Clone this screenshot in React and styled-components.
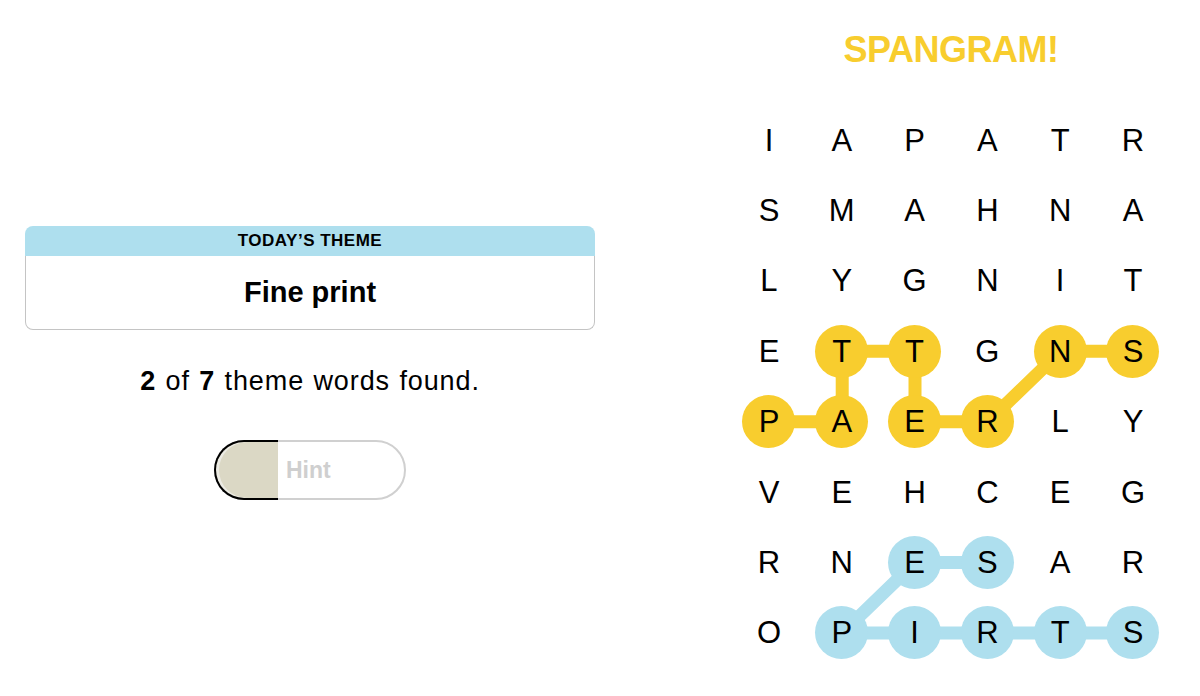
import React from 'react';
import styled, { createGlobalStyle } from 'styled-components';

const YELLOW = '#f8cd2e';
const BLUE = '#aedfee';
const COL = 72.8;
const ROW = 70.4;

const GlobalStyle = createGlobalStyle`
  body {
    margin: 0;
    background: #fff;
    color: #000;
    font-family: 'Liberation Sans', Arial, sans-serif;
  }
`;

const Page = styled.div`
  display: flex;
  width: 1200px;
  height: 696px;
  padding-left: 25px;
  box-sizing: border-box;
  overflow: hidden;
`;

const LeftColumn = styled.div`
  width: 570px;
  padding-top: 226px;
  display: flex;
  flex-direction: column;
  align-items: center;
`;

const ThemeCard = styled.div`
  width: 100%;
`;

const ThemeHeader = styled.div`
  height: 30px;
  background: ${BLUE};
  border-radius: 8px 8px 0 0;
  display: flex;
  align-items: center;
  justify-content: center;
  font-size: 17px;
  font-weight: 700;
  letter-spacing: 0.5px;
  text-transform: uppercase;
`;

const ThemeBody = styled.div`
  height: 73px;
  border: 1px solid #c4c4c4;
  border-top: none;
  border-radius: 0 0 8px 8px;
  display: flex;
  align-items: center;
  justify-content: center;
  font-size: 29px;
  font-weight: 700;
`;

const Progress = styled.p`
  margin: 36px 0 0;
  font-size: 27px;
  letter-spacing: 0.9px;
  word-spacing: 1px;
  line-height: 30px;

  b {
    font-weight: 700;
  }
`;

const HintButton = styled.button`
  position: relative;
  margin-top: 44px;
  width: 192px;
  height: 60px;
  border: 2px solid #d0d0d0;
  border-radius: 30px;
  background: #fff;
  padding: 0 0 0 70px;
  display: flex;
  align-items: center;
  font-family: 'Liberation Sans', Arial, sans-serif;
  font-size: 23px;
  font-weight: 700;
  color: #cfcfcf;
`;

const HintLabel = styled.span`
  position: relative;
`;

const HintFill = styled.span`
  position: absolute;
  left: -2px;
  top: -2px;
  bottom: -2px;
  width: ${p => p.$width}px;
  background: #dbd8c5;
  border: 2.5px solid #000;
  border-right: none;
  border-radius: 30px 0 0 30px;
  box-shadow: inset 3px 0 0 #ecebe4;
  box-sizing: border-box;
`;

const RightColumn = styled.div`
  width: ${COL * 6}px;
  margin-left: 137.6px;
  padding-top: 30px;
  display: flex;
  flex-direction: column;
`;

const Title = styled.h1`
  margin: 0;
  height: 40px;
  line-height: 40px;
  text-align: center;
  font-size: 36px;
  font-weight: 700;
  letter-spacing: -0.5px;
  color: ${YELLOW};
`;

const Board = styled.div`
  position: relative;
  margin-top: 35px;
  display: grid;
  grid-template-columns: repeat(6, ${COL}px);
  grid-template-rows: repeat(8, ${ROW}px);
`;

const Links = styled.svg`
  position: absolute;
  left: 0;
  top: 0;
  width: 100%;
  height: 100%;
`;

const Cell = styled.div`
  position: relative;
  display: flex;
  align-items: center;
  justify-content: center;
`;

const Dot = styled.span`
  width: 53px;
  height: 53px;
  border-radius: 50%;
  background: ${p => p.$color || 'transparent'};
  display: flex;
  align-items: center;
  justify-content: center;
  font-size: 31px;
  line-height: 1;
  color: #000;
`;

const letters = [
  'IAPATR',
  'SMAHNA',
  'LYGNIT',
  'ETTGNS',
  'PAERLY',
  'VEHCEG',
  'RNESAR',
  'OPIRTS',
];

const words = [
  { color: YELLOW, path: [[4, 0], [4, 1], [3, 1], [3, 2], [4, 2], [4, 3], [3, 4], [3, 5]] },
  { color: BLUE, path: [[7, 5], [7, 4], [7, 3], [7, 2], [7, 1], [6, 2], [6, 3]] },
];

const colorAt = (r, c) => {
  const w = words.find(w => w.path.some(([pr, pc]) => pr === r && pc === c));
  return w ? w.color : null;
};

const center = ([r, c]) => [COL / 2 + c * COL, ROW / 2 + r * ROW];

const App = () => (
  <>
    <GlobalStyle />
    <Page>
      <LeftColumn>
        <ThemeCard>
          <ThemeHeader>Today’s theme</ThemeHeader>
          <ThemeBody>Fine print</ThemeBody>
        </ThemeCard>
        <Progress>
          <b>2</b> of <b>7</b> theme words found.
        </Progress>
        <HintButton>
          <HintFill $width={64} />
          <HintLabel>Hint</HintLabel>
        </HintButton>
      </LeftColumn>

      <RightColumn>
        <Title>SPANGRAM!</Title>
        <Board>
          <Links viewBox={`0 0 ${COL * 6} ${ROW * 8}`}>
            {words.map((w, i) => (
              <polyline
                key={i}
                points={w.path.map(p => center(p).join(',')).join(' ')}
                fill="none"
                stroke={w.color}
                strokeWidth="13"
                strokeLinejoin="round"
              />
            ))}
          </Links>
          {letters.map((row, r) =>
            row.split('').map((ch, c) => (
              <Cell key={`${r}-${c}`}>
                <Dot $color={colorAt(r, c)}>{ch}</Dot>
              </Cell>
            ))
          )}
        </Board>
      </RightColumn>
    </Page>
  </>
);

export default App;
